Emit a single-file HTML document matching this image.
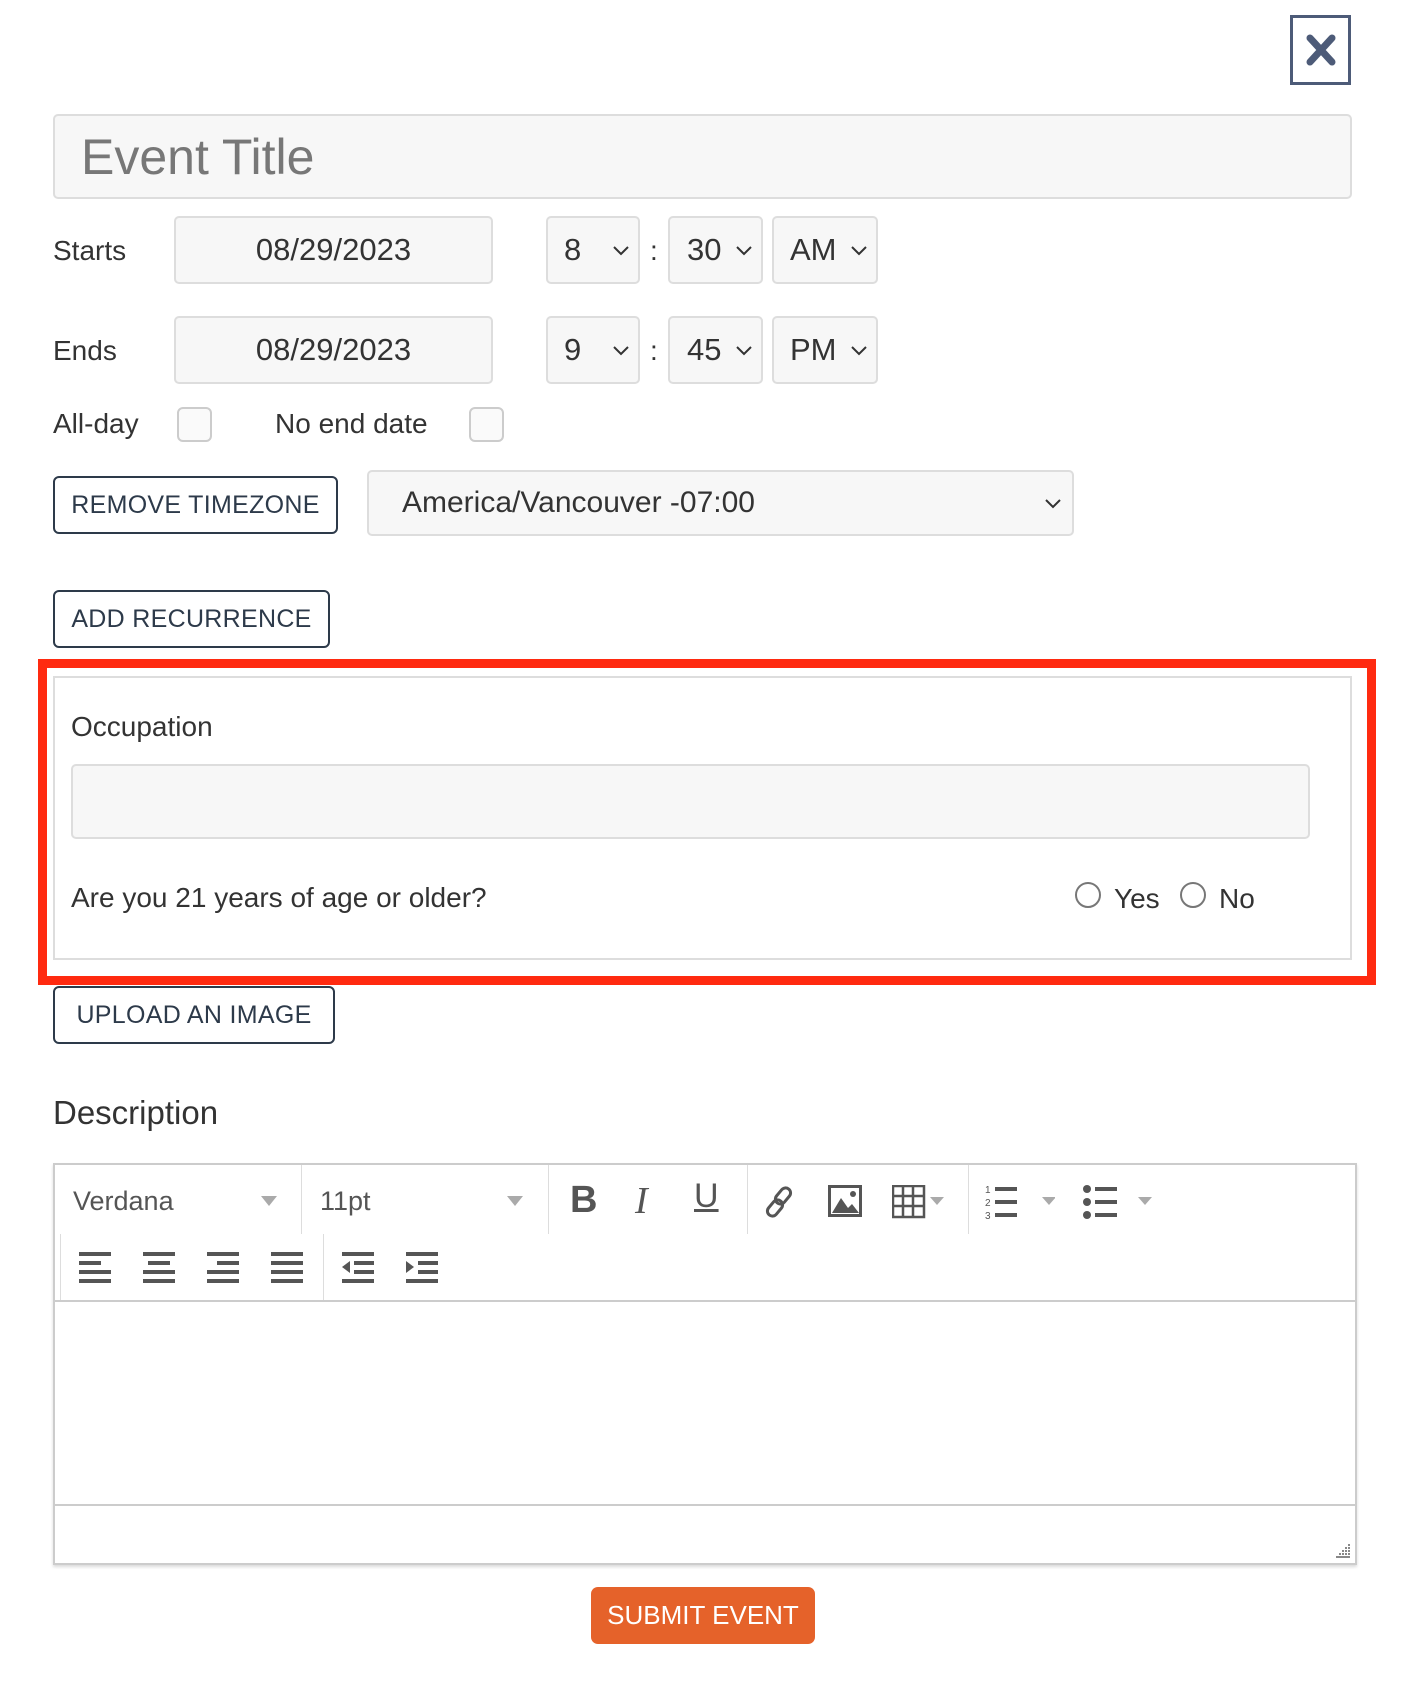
<!DOCTYPE html>
<html><head><style>
*{box-sizing:border-box;margin:0;padding:0}
body{width:1412px;height:1704px;background:#fff;font-family:"Liberation Sans",sans-serif;color:#333;position:relative;overflow:hidden}
.a{position:absolute}
.inp{position:absolute;background:#f7f7f7;border:2px solid #ddd;border-radius:5px;display:flex;align-items:center;font-size:31px;color:#333}
.lbl{position:absolute;font-size:28px;color:#333}
.btn{position:absolute;border:2px solid #2d3a4a;border-radius:6px;font-size:25px;color:#2d3a4a;display:flex;align-items:center;justify-content:center;letter-spacing:.3px}
.chev{position:absolute;right:8px;top:50%;margin-top:-9px}
.cb{position:absolute;width:35px;height:35px;border:2px solid #ccc;border-radius:6px;background:#fafafa}
.ic{position:absolute}
</style></head><body>
<div class="a" style="left:1290px;top:15px;width:61px;height:70px;border:3px solid #4d5b78;display:flex;align-items:center;justify-content:center">
<svg width="30" height="32" viewBox="0 0 30 32"><path d="M4 4 L26 28 M26 4 L4 28" stroke="#4d5b78" stroke-width="7" stroke-linecap="round"/></svg></div>

<div class="inp" style="left:53px;top:114px;width:1299px;height:85px;padding-left:26px;font-size:50px;color:#777">Event Title</div>

<div class="lbl" style="left:53px;top:235px">Starts</div>
<div class="inp" style="left:174px;top:216px;width:319px;height:68px;justify-content:center">08/29/2023</div>
<div class="inp" style="left:546px;top:216px;width:94px;height:68px;padding-left:16px">8<svg class="chev" width="18" height="18"><path d="M2 6l7 7 7-7" fill="none" stroke="#333" stroke-width="2"/></svg></div>
<div class="lbl" style="left:650px;top:235px">:</div>
<div class="inp" style="left:668px;top:216px;width:95px;height:68px;padding-left:17px">30<svg class="chev" width="18" height="18"><path d="M2 6l7 7 7-7" fill="none" stroke="#333" stroke-width="2"/></svg></div>
<div class="inp" style="left:772px;top:216px;width:106px;height:68px;padding-left:16px">AM<svg class="chev" width="18" height="18"><path d="M2 6l7 7 7-7" fill="none" stroke="#333" stroke-width="2"/></svg></div>

<div class="lbl" style="left:53px;top:335px">Ends</div>
<div class="inp" style="left:174px;top:316px;width:319px;height:68px;justify-content:center">08/29/2023</div>
<div class="inp" style="left:546px;top:316px;width:94px;height:68px;padding-left:16px">9<svg class="chev" width="18" height="18"><path d="M2 6l7 7 7-7" fill="none" stroke="#333" stroke-width="2"/></svg></div>
<div class="lbl" style="left:650px;top:335px">:</div>
<div class="inp" style="left:668px;top:316px;width:95px;height:68px;padding-left:17px">45<svg class="chev" width="18" height="18"><path d="M2 6l7 7 7-7" fill="none" stroke="#333" stroke-width="2"/></svg></div>
<div class="inp" style="left:772px;top:316px;width:106px;height:68px;padding-left:16px">PM<svg class="chev" width="18" height="18"><path d="M2 6l7 7 7-7" fill="none" stroke="#333" stroke-width="2"/></svg></div>

<div class="lbl" style="left:53px;top:408px">All-day</div>
<div class="cb" style="left:177px;top:407px"></div>
<div class="lbl" style="left:275px;top:408px">No end date</div>
<div class="cb" style="left:469px;top:407px"></div>

<div class="btn" style="left:53px;top:476px;width:285px;height:58px">REMOVE TIMEZONE</div>
<div class="inp" style="left:367px;top:470px;width:707px;height:66px;padding-left:33px;font-size:30px">America/Vancouver -07:00<svg class="chev" style="right:10px" width="18" height="18"><path d="M2 6l7 7 7-7" fill="none" stroke="#333" stroke-width="2"/></svg></div>

<div class="btn" style="left:53px;top:590px;width:277px;height:58px">ADD RECURRENCE</div>

<div class="a" style="left:38px;top:659px;width:1338px;height:326px;border:9px solid #ff2a10"></div>
<div class="a" style="left:53px;top:676px;width:1299px;height:284px;border:2px solid #ddd"></div>
<div class="lbl" style="left:71px;top:711px">Occupation</div>
<div class="inp" style="left:71px;top:764px;width:1239px;height:75px"></div>
<div class="lbl" style="left:71px;top:882px">Are you 21 years of age or older?</div>
<div class="a" style="left:1075px;top:882px;width:26px;height:26px;border:2px solid #777;border-radius:50%"></div>
<div class="lbl" style="left:1114px;top:883px">Yes</div>
<div class="a" style="left:1180px;top:882px;width:26px;height:26px;border:2px solid #777;border-radius:50%"></div>
<div class="lbl" style="left:1219px;top:883px">No</div>

<div class="btn" style="left:53px;top:986px;width:282px;height:58px">UPLOAD AN IMAGE</div>

<div class="a" style="left:53px;top:1094px;font-size:33px;color:#333">Description</div>

<div class="a" style="left:53px;top:1163px;width:1304px;height:402px;border:2px solid #ccc;box-shadow:0 2px 3px rgba(0,0,0,.15)">
 <div class="a" style="left:0;top:135px;width:1300px;height:2px;background:#ccc"></div>
 <div class="a" style="left:0;top:339px;width:1300px;height:2px;background:#ccc"></div>
 <div class="a" style="left:246px;top:0;width:1px;height:69px;background:#ddd"></div>
 <div class="a" style="left:493px;top:0;width:1px;height:69px;background:#ddd"></div>
 <div class="a" style="left:692px;top:0;width:1px;height:69px;background:#ddd"></div>
 <div class="a" style="left:913px;top:0;width:1px;height:69px;background:#ddd"></div>
 <div class="a" style="left:5px;top:69px;width:1px;height:66px;background:#ddd"></div>
 <div class="a" style="left:268px;top:69px;width:1px;height:66px;background:#ddd"></div>
 <div class="a" style="left:18px;top:21px;font-size:27px;color:#555">Verdana</div>
 <svg class="ic" style="left:206px;top:30px" width="16" height="12"><path d="M0 1h16L8 11z" fill="#aaa"/></svg>
 <div class="a" style="left:265px;top:21px;font-size:27px;color:#555">11pt</div>
 <svg class="ic" style="left:452px;top:30px" width="16" height="12"><path d="M0 1h16L8 11z" fill="#aaa"/></svg>
 <div class="a" style="left:515px;top:14px;font-size:38px;font-weight:bold;color:#555">B</div>
 <div class="a" style="left:580px;top:14px;font-size:38px;font-style:italic;font-family:'Liberation Serif',serif;color:#555">I</div>
 <div class="a" style="left:639px;top:12px;font-size:34px;text-decoration:underline;color:#555">U</div>
 <svg class="ic" style="left:706px;top:19px" width="36" height="36" viewBox="0 0 36 36"><g fill="none" stroke="#555" stroke-width="3"><rect x="17" y="3" width="10" height="18" rx="5" transform="rotate(40 22 12)"/><rect x="9" y="15" width="10" height="18" rx="5" transform="rotate(40 14 24)"/></g></svg>
 <svg class="ic" style="left:773px;top:20px" width="34" height="32"><rect x="1.5" y="1.5" width="31" height="29" fill="none" stroke="#555" stroke-width="3"/><path d="M4 28l9-15 7 10 4-4 7 9z" fill="#555"/><circle cx="25" cy="9" r="3" fill="#555"/></svg>
 <svg class="ic" style="left:837px;top:20px" width="56" height="34"><g fill="none" stroke="#555" stroke-width="2.5"><rect x="1" y="1" width="31" height="31"/><path d="M1 11h31M1 21h31M11 1v31M21 1v31"/></g><path d="M38 12h14l-7 8z" fill="#aaa"/></svg>
 <svg class="ic" style="left:930px;top:17px" width="70" height="40"><g fill="#555"><rect x="10" y="5" width="22" height="4"/><rect x="10" y="18" width="22" height="4"/><rect x="10" y="31" width="22" height="4"/></g><text x="0" y="11" font-size="10" fill="#555">1</text><text x="0" y="24" font-size="10" fill="#555">2</text><text x="0" y="37" font-size="10" fill="#555">3</text><path d="M57 15h14l-7 8z" fill="#aaa"/></svg>
 <svg class="ic" style="left:1028px;top:17px" width="70" height="40"><g fill="#555"><circle cx="4" cy="7" r="4"/><circle cx="4" cy="20" r="4"/><circle cx="4" cy="33" r="4"/><rect x="12" y="5" width="22" height="4"/><rect x="12" y="18" width="22" height="4"/><rect x="12" y="31" width="22" height="4"/></g><path d="M55 15h14l-7 8z" fill="#aaa"/></svg>
 <svg class="ic" style="left:24px;top:85px" width="360" height="34"><g fill="#555">
  <rect x="0" y="2" width="32" height="4"/><rect x="0" y="11" width="22" height="4"/><rect x="0" y="20" width="32" height="4"/><rect x="0" y="29" width="32" height="4"/>
  <rect x="64" y="2" width="32" height="4"/><rect x="69" y="11" width="22" height="4"/><rect x="64" y="20" width="32" height="4"/><rect x="64" y="29" width="32" height="4"/>
  <rect x="128" y="2" width="32" height="4"/><rect x="138" y="11" width="22" height="4"/><rect x="128" y="20" width="32" height="4"/><rect x="128" y="29" width="32" height="4"/>
  <rect x="192" y="2" width="32" height="4"/><rect x="192" y="11" width="32" height="4"/><rect x="192" y="20" width="32" height="4"/><rect x="192" y="29" width="32" height="4"/>
  <rect x="263" y="2" width="32" height="4"/><rect x="275" y="11" width="20" height="4"/><rect x="275" y="20" width="20" height="4"/><rect x="263" y="29" width="32" height="4"/><path d="M263 17l8-6v12z"/>
  <rect x="327" y="2" width="32" height="4"/><rect x="339" y="11" width="20" height="4"/><rect x="339" y="20" width="20" height="4"/><rect x="327" y="29" width="32" height="4"/><path d="M335 17l-8-6v12z"/>
 </g></svg>
 <svg class="ic" style="left:1280px;top:378px" width="16" height="16"><g fill="#888"><rect x="13" y="1" width="2" height="2"/><rect x="10" y="4" width="2" height="2"/><rect x="13" y="4" width="2" height="2"/><rect x="7" y="7" width="2" height="2"/><rect x="10" y="7" width="2" height="2"/><rect x="13" y="7" width="2" height="2"/><rect x="4" y="10" width="2" height="2"/><rect x="7" y="10" width="2" height="2"/><rect x="10" y="10" width="2" height="2"/><rect x="13" y="10" width="2" height="2"/><rect x="1" y="13" width="14" height="2"/></g></svg>
</div>

<div class="a" style="left:591px;top:1587px;width:224px;height:57px;background:#e5622a;border-radius:7px;color:#fff;font-size:26px;display:flex;align-items:center;justify-content:center">SUBMIT EVENT</div>
</body></html>
